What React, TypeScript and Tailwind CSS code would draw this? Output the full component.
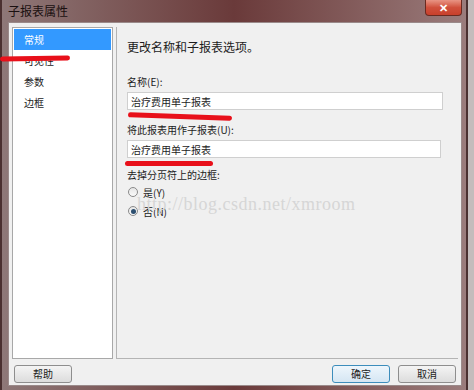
import React from 'react'

const font = { fontFamily: '"Noto Sans CJK SC", "Noto Sans", sans-serif' }

function Radio({ checked, label }: { checked?: boolean; label: string }) {
  return (
    <div className="flex items-center h-[16px] gap-[5px] pl-[1px]">
      <span className="w-[10px] h-[10px] rounded-full border border-[#8a8a8a] bg-gradient-to-b from-[#e6e6e6] to-[#fafafa] flex items-center justify-center">
        {checked && <span className="w-[5px] h-[5px] rounded-full bg-[#2c4f70]" />}
      </span>
      <span className="text-[10px] text-[#1c1c1c]">{label}</span>
    </div>
  )
}

function Btn({ children, primary }: { children: React.ReactNode; primary?: boolean }) {
  return (
    <button
      className={
        primary
          ? 'w-[58px] h-[18px] rounded-[3px] border border-[#3c8dbc] bg-gradient-to-b from-[#eef6fc] to-[#d5e6f3] text-[10px] text-[#1c1c1c] leading-none'
          : 'w-[58px] h-[18px] rounded-[3px] border border-[#8e8e8e] bg-gradient-to-b from-[#f4f4f4] to-[#dcdcdc] text-[10px] text-[#1c1c1c] leading-none'
      }
    >
      {children}
    </button>
  )
}

export default function App() {
  const items = ['常规', '可见性', '参数', '边框']

  return (
    <div className="w-[474px] h-[390px] flex overflow-hidden bg-[#c4bcbc]" style={font}>
      {/* window */}
      <div className="relative w-[468px] h-[390px] flex flex-col bg-gradient-to-r from-[#8e7878] via-[#6a3a3a] to-[#9a7c7c] border-l-2 border-r-2 border-[#4a3030]">
        {/* title bar */}
        <div className="h-[22px] flex items-start justify-between pl-[6px] pr-[4px]">
          <span className="text-[12px] leading-[22px] text-[#1a1010]">子报表属性</span>
          <div className="w-[37px] h-[16px] rounded-b-[4px] border border-t-0 border-[#6a2a20] bg-gradient-to-b from-[#e89484] via-[#d0503c] to-[#c8402c] flex items-center justify-center">
            <span className="text-white text-[11px] font-bold leading-none">✕</span>
          </div>
        </div>

        {/* client area */}
        <div className="ml-[6px] mr-[4px] h-[364px] bg-[#f0f0f0] border border-[#9a8a8a] flex flex-col pt-[4px] pl-[3px] pr-[3px]">
          <div className="flex h-[332px]">
            {/* list */}
            <div className="w-[101px] h-[332px] bg-white border border-[#a8a8a8] p-[1px]">
              {items.map((t, i) => (
                <div
                  key={t}
                  className={
                    i === 0
                      ? 'h-[21px] pl-[10px] flex items-center text-[10px] text-white bg-[#3399ff]'
                      : 'h-[21px] pl-[10px] flex items-center text-[10px] text-[#1c1c1c]'
                  }
                >
                  {t}
                </div>
              ))}
            </div>

            {/* right panel */}
            <div className="ml-[3px] flex-1 border-l border-b border-[#b4b4b4] pt-[12px] pl-[10px]">
              <div className="h-[16px] leading-[16px] text-[12px] text-[#1c1c1c]">更改名称和子报表选项。</div>

              <div className="mt-[20px] h-[14px] leading-[14px] text-[10px] text-[#1c1c1c]">名称(E):</div>
              <div className="mt-[3px] w-[316px] h-[18px] bg-white border border-[#cfcfcf] pl-[3px] flex items-center text-[10px] text-[#1c1c1c]">
                治疗费用单子报表
              </div>

              <div className="mt-[13px] h-[14px] leading-[14px] text-[10px] text-[#1c1c1c]">将此报表用作子报表(U):</div>
              <div className="mt-[3px] w-[314px] h-[18px] bg-white border border-[#cfcfcf] pl-[3px] flex items-center text-[10px] text-[#1c1c1c]">
                治疗费用单子报表
              </div>

              <div className="mt-[10px] h-[14px] leading-[14px] text-[10px] text-[#1c1c1c]">去掉分页符上的边框:</div>
              <div className="mt-[2px]">
                <Radio label="是(Y)" />
              </div>
              <div className="mt-[3px]">
                <Radio checked label="否(N)" />
              </div>
            </div>
          </div>

          {/* buttons */}
          <div className="mt-[6px] flex items-center justify-between pl-[2px] pr-[2px]">
            <Btn>帮助</Btn>
            <div className="flex gap-[8px]">
              <Btn primary>确定</Btn>
              <Btn>取消</Btn>
            </div>
          </div>
        </div>

        {/* watermark */}
        <div
          className="absolute left-[135px] top-[191px] text-[18px] tracking-[0.5px] text-[#d6d6d6] pointer-events-none"
          style={{ fontFamily: '"Liberation Serif", serif' }}
        >
          http://blog.csdn.net/xmroom
        </div>

        {/* red marker strokes */}
        <div className="absolute left-[-2px] top-[56px] w-[70px] h-[5px] rounded-full bg-[#e8101a] -rotate-[1deg]" />
        <div className="absolute left-[126px] top-[114px] w-[104px] h-[5px] rounded-full bg-[#e8101a] rotate-[2deg]" />
        <div className="absolute left-[123px] top-[161px] w-[88px] h-[5px] rounded-full bg-[#e8101a]" />
      </div>
    </div>
  )
}
